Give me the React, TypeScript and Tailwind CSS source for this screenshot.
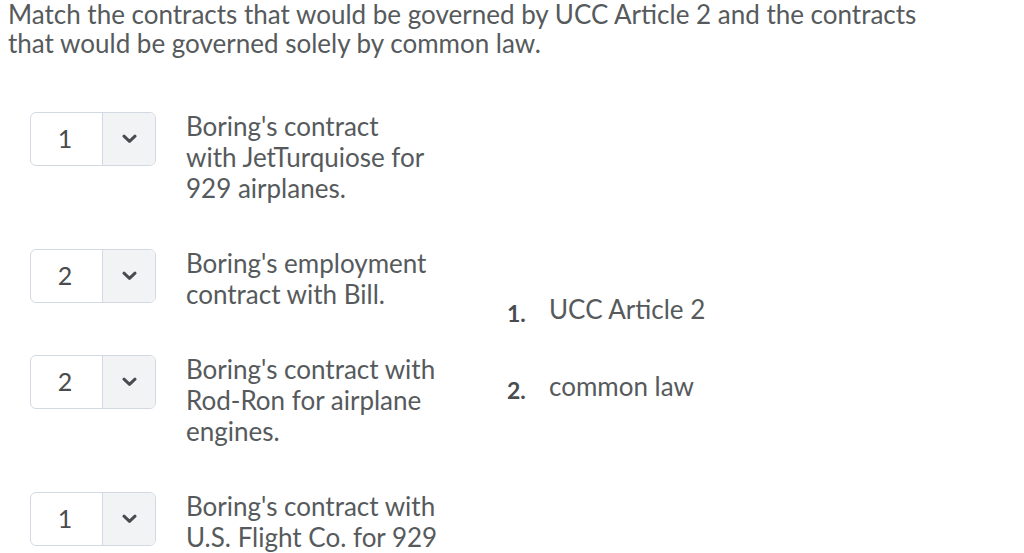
import React from "react";

type Row = { value: string; lines: string[] };

const rows: Row[] = [
  { value: "1", lines: ["Boring's contract", "with JetTurquiose for", "929 airplanes."] },
  { value: "2", lines: ["Boring's employment", "contract with Bill."] },
  { value: "2", lines: ["Boring's contract with", "Rod-Ron for airplane", "engines."] },
  { value: "1", lines: ["Boring's contract with", "U.S. Flight Co. for 929", "airplanes."] },
];

function Chevron() {
  return (
    <svg width="15" height="10" viewBox="0 0 15 10" aria-hidden>
      <path d="M2 2.2 L7.5 7.4 L13 2.2" fill="none" stroke="#494c4e" strokeWidth="3" strokeLinecap="round" strokeLinejoin="round" />
    </svg>
  );
}

function NumberSelect({ value }: { value: string }) {
  return (
    <div className="flex h-[54px] w-[126px] shrink-0 overflow-hidden rounded-[6px] border border-[#d3d9e3] bg-white">
      <div className="flex w-[71px] items-center justify-center pr-[3px] text-[25px] text-[#494c4e]">{value}</div>
      <div className="flex flex-1 items-center justify-center border-l border-[#d3d9e3] bg-[#f1f3f5]">
        <Chevron />
      </div>
    </div>
  );
}

export default function App() {
  return (
    <div className="h-[553px] w-[1024px] overflow-hidden bg-white text-[#565a5c]" style={{ fontFamily: "Lato, 'Open Sans', sans-serif" }}>
      <p className="pl-[8px] text-[26px] leading-[29px]">
        Match the contracts that would be governed by UCC Article 2 and the contracts
        <br />
        that would be governed solely by common law.
      </p>
      <div className="flex pt-[54px]">
        <div className="flex w-[490px] flex-col gap-[44px] pl-[30px]">
          {rows.map((r, i) => (
            <div key={i} className="flex items-start gap-[30px]">
              <NumberSelect value={r.value} />
              <div className="-mt-[1px] mb-[1px] text-[26px] leading-[31px]">
                {r.lines.map((l, j) => (
                  <div key={j}>{l}</div>
                ))}
              </div>
            </div>
          ))}
        </div>
        <div className="flex flex-col gap-[42px] pl-[17px] pt-[181px]">
          {["UCC Article 2", "common law"].map((t, i) => (
            <div key={i} className="flex items-baseline">
              <span className="w-[42px] translate-y-[3px] text-[23px] font-bold text-[#494c4e]">{i + 1}.</span>
              <span className="text-[26px] leading-[31px]">{t}</span>
            </div>
          ))}
        </div>
      </div>
    </div>
  );
}
